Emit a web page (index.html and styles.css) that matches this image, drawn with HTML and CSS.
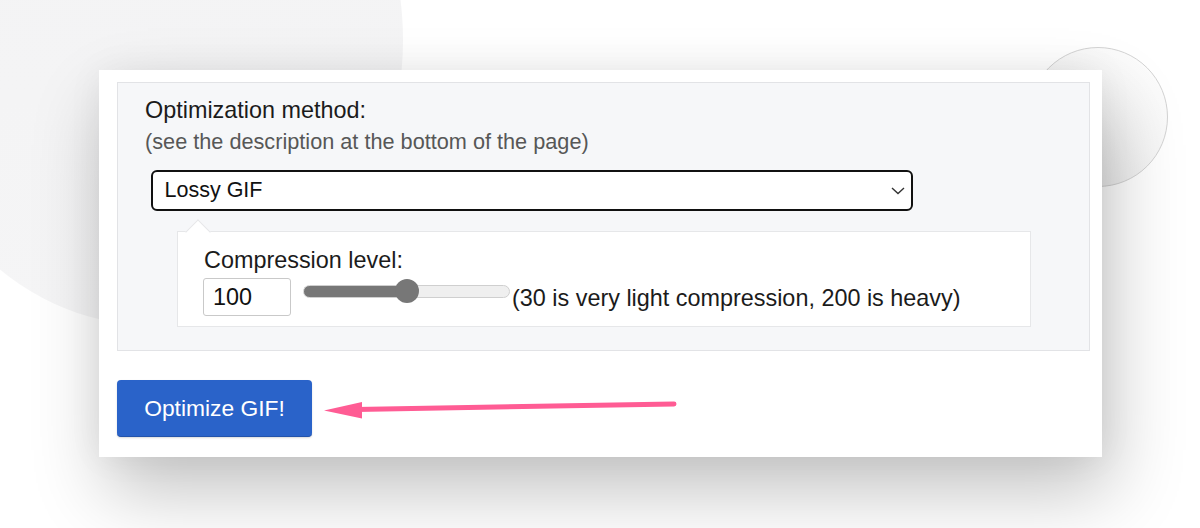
FILE: index.html
```html
<!DOCTYPE html>
<html lang="en">
<head>
<meta charset="utf-8">
<title>Optimize GIF</title>
<link rel="stylesheet" href="styles.css">
</head>
<body>
<div class="stage">
  <div class="blob"></div>
  <div class="ring"></div>
  <div class="card">
    <div class="panel">
      <div class="label">Optimization method:</div>
      <div class="help">(see the description at the bottom of the page)</div>
      <div class="select">
        <span>Lossy GIF</span>
        <svg class="chev" width="14" height="8" viewBox="0 0 14 8"><path d="M1 1 L7 6.5 L13 1" fill="none" stroke="#333" stroke-width="1.4"/></svg>
      </div>
      <div class="sub">
        <div class="label">Compression level:</div>
        <div class="row">
          <input class="num" type="text" value="100">
          <input class="range" type="range" min="0" max="200" value="100">
          <span class="hint">(30 is very light compression, 200 is heavy)</span>
        </div>
      </div>
    </div>
    <button class="btn">Optimize GIF!</button>
  </div>
  <svg class="arrow" width="1200" height="528" viewBox="0 0 1200 528">
    <path d="M674 404 L356 409.5" stroke="#ff5c94" stroke-width="5" stroke-linecap="round" fill="none"/>
    <polygon points="324,410.5 362,402 362,418.5" fill="#ff5c94"/>
  </svg>
</div>
</body>
</html>
```

FILE: styles.css
```css
* { box-sizing: border-box; }
html, body { margin: 0; padding: 0; background: #fff; }
body { font-family: "Liberation Sans", Arial, Helvetica, sans-serif; color: #1b1b1b; }

.stage {
  position: relative;
  isolation: isolate;
  width: 1200px;
  height: 528px;
  overflow: hidden;
  background: #fff;
  padding: 70px 0 0 99px;
}

.blob {
  position: absolute;
  z-index: -1;
  left: -103px;
  top: -245px;
  width: 506px;
  height: 570px;
  border-radius: 50%;
  background: linear-gradient(180deg, #f3f3f4 0%, #f4f4f5 60%, #f5f5f6 100%);
}

.ring {
  position: absolute;
  z-index: -1;
  left: 1028px;
  top: 47px;
  width: 140px;
  height: 140px;
  border-radius: 50%;
  border: 1px solid #d3d3d3;
  background: linear-gradient(225deg, #ffffff 0%, #f6f6f6 45%, #e4e4e4 100%);
}

.card {
  position: relative;
  width: 1003px;
  height: 387px;
  background: #fff;
  padding: 12px 12px 20px 18px;
  box-shadow: 8px 34px 70px rgba(0, 0, 0, 0.24), 0 0 34px rgba(0, 0, 0, 0.05);
}

.panel {
  width: 973px;
  height: 269px;
  background: #f6f7f9;
  border: 1px solid #e2e3e6;
  padding: 11px 0 0 27px;
}

.label {
  font-size: 23.4px;
  line-height: 32px;
  color: #1b1b1b;
}

.help {
  font-size: 21.7px;
  line-height: 32px;
  color: #575757;
}

.select {
  margin: 12px 0 0 6px;
  width: 762px;
  height: 41px;
  background: #fff;
  border: 2.5px solid #111;
  border-radius: 6px;
  display: flex;
  align-items: center;
  justify-content: space-between;
  padding: 0 6px 0 11.5px;
  font-size: 21.5px;
  color: #111;
}

.chev { display: block; margin-top: 1px; }

.sub {
  position: relative;
  margin: 20px 0 0 32px;
  width: 854px;
  height: 96px;
  background: #fff;
  border: 1px solid #e6e7e9;
  padding: 12px 0 0 26px;
}

.sub::before {
  content: "";
  position: absolute;
  left: 11px;
  top: -9px;
  width: 17px;
  height: 17px;
  background: #fff;
  border-left: 1px solid #e6e7e9;
  border-top: 1px solid #e6e7e9;
  transform: rotate(45deg);
}

.row {
  display: flex;
  align-items: center;
  margin-top: 2px;
}

.num {
  width: 88px;
  height: 38px;
  margin: 0 0 0 -1px;
  border: 1px solid #c9c9c9;
  border-radius: 3px;
  padding: 0 0 0 9px;
  font-family: "Liberation Sans", Arial, sans-serif;
  font-size: 23.4px;
  color: #111;
  background: #fff;
  outline: none;
}

.range {
  -webkit-appearance: none;
  appearance: none;
  align-self: flex-start;
  width: 207px;
  height: 24px;
  margin: 1px 2px 0 12px;
  background: transparent;
  padding: 0;
}

.range::-webkit-slider-runnable-track {
  height: 13px;
  border-radius: 7px;
  border: 1px solid #cfcfcf;
  background: linear-gradient(to right, #777 0, #777 50%, #efefef 50%, #efefef 100%);
}

.range::-webkit-slider-thumb {
  -webkit-appearance: none;
  appearance: none;
  width: 24px;
  height: 24px;
  border-radius: 50%;
  background: #777;
  border: none;
  margin-top: -6.5px;
}

.hint {
  font-size: 23.4px;
  color: #1b1b1b;
  margin-top: 3px;
  white-space: nowrap;
}

.btn {
  display: block;
  margin-top: 29px;
  width: 195px;
  height: 57px;
  background: #2a63c9;
  color: #fff;
  border: none;
  border-bottom: 1px solid #2353aa;
  border-radius: 4px;
  font-family: "Liberation Sans", Arial, sans-serif;
  font-size: 22.8px;
  padding: 0;
  box-shadow: 0 1px 2px rgba(0, 0, 0, 0.15);
}

.arrow {
  position: absolute;
  left: 0;
  top: 0;
  pointer-events: none;
}
```
